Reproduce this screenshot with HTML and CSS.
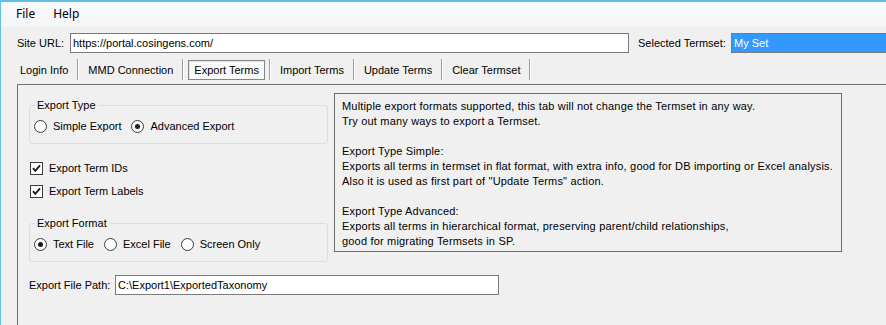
FILE: index.html
```html
<!DOCTYPE html>
<html lang="en">
<head>
    <meta charset="UTF-8">
    <meta name="viewport" content="width=device-width, initial-scale=1.0">
    <title>Taxonomy Export</title>
    <link rel="stylesheet" href="styles.css">
</head>
<body>
    <div class="window">
        <!-- Menu -->
        <div class="menuBar">
            <span class="menuItem">File</span>
            <span class="menuItem">Help</span>
        </div>

        <!-- Site + termset -->
        <div class="siteRow">
            <span class="siteLabel">Site URL:</span>
            <input class="textInput siteInput" type="text" value="https://portal.cosingens.com/">
            <span class="termsetLabel">Selected Termset:</span>
            <div class="comboBox">My Set</div>
        </div>

        <!-- Tool strip tabs -->
        <div class="tabStrip">
            <span class="tabItem">Login Info</span>
            <span class="tabSep"></span>
            <span class="tabItem">MMD Connection</span>
            <span class="tabSep"></span>
            <span class="tabItem active">Export Terms</span>
            <span class="tabSep"></span>
            <span class="tabItem">Import Terms</span>
            <span class="tabSep"></span>
            <span class="tabItem">Update Terms</span>
            <span class="tabSep"></span>
            <span class="tabItem">Clear Termset</span>
            <span class="tabSep"></span>
        </div>

        <div class="tabPage">
            <div class="leftCol">
                <fieldset class="groupBox">
                    <legend>Export Type</legend>
                    <div class="optionRow">
                        <span class="option"><span class="radio"></span>Simple Export</span>
                        <span class="option"><span class="radio checked"></span>Advanced Export</span>
                    </div>
                </fieldset>

                <div class="checkRow first">
                    <span class="checkBox"><svg width="11" height="11" viewBox="0 0 11 11"><polyline points="2,5.2 4.3,7.8 9,2.4" fill="none" stroke="#1e1e1e" stroke-width="1.9"/></svg></span>Export Term IDs
                </div>
                <div class="checkRow">
                    <span class="checkBox"><svg width="11" height="11" viewBox="0 0 11 11"><polyline points="2,5.2 4.3,7.8 9,2.4" fill="none" stroke="#1e1e1e" stroke-width="1.9"/></svg></span>Export Term Labels
                </div>

                <fieldset class="groupBox formatBox">
                    <legend>Export Format</legend>
                    <div class="optionRow">
                        <span class="option"><span class="radio checked"></span>Text File</span>
                        <span class="option"><span class="radio"></span>Excel File</span>
                        <span class="option"><span class="radio"></span>Screen Only</span>
                    </div>
                </fieldset>
            </div>

            <div class="infoBox">
                <div>Multiple export formats supported, this tab will not change the Termset in any way.</div>
                <div>Try out many ways to export a Termset.</div>
                <div>&nbsp;</div>
                <div>Export Type Simple:</div>
                <div>Exports all terms in termset in flat format, with extra info, good for DB importing or Excel analysis.</div>
                <div>Also it is used as first part of "Update Terms" action.</div>
                <div>&nbsp;</div>
                <div>Export Type Advanced:</div>
                <div>Exports all terms in hierarchical format, preserving parent/child relationships,</div>
                <div>good for migrating Termsets in SP.</div>
            </div>

            <div class="pathRow">
                <span class="pathLabel">Export File Path:</span>
                <input class="textInput pathInput" type="text" value="C:\Export1\ExportedTaxonomy">
            </div>
        </div>
    </div>
</body>
</html>
```

FILE: styles.css
```css
/* CSS for styling */
body {
  font-family: "Liberation Sans", Arial, sans-serif;
  font-size: 11px;
  color: #000;
  background-color: #f0f0f0;
  margin: 0;
  padding: 0;
  overflow: hidden;
}

.window {
  height: 325px;
  box-sizing: border-box;
  border-top: 2px solid #63bfe6;
  border-left: 1px solid #63bfe6;
  display: flex;
  flex-direction: column;
}

/* menu */
.menuBar {
  height: 25px;
  background: linear-gradient(#f9fafb, #f4f5f6);
  display: flex;
  align-items: center;
  padding-left: 6px;
  font-family: "Noto Sans", "Liberation Sans", sans-serif;
  font-size: 12px;
}

.menuItem {
  padding: 0 9px 2px 9px;
}

/* site url row */
.siteRow {
  display: flex;
  align-items: center;
  padding: 6px 0 0 16px;
}

.siteLabel {
  width: 53px;
}

.textInput {
  box-sizing: border-box;
  height: 20px;
  border: 1px solid #7a7a7a;
  background-color: #fff;
  font-family: "Liberation Sans", Arial, sans-serif;
  font-size: 11px;
  color: #000;
  padding: 0 2px;
  margin: 0;
  outline: none;
}

.siteInput {
  width: 559px;
}

.termsetLabel {
  margin-left: 9px;
  width: 93px;
}

.comboBox {
  flex: 1;
  height: 20px;
  box-sizing: border-box;
  border: 1px solid #7a7a7a;
  border-right: none;
  background-color: #3399ff;
  color: #fff;
  padding-left: 2px;
  line-height: 18px;
}

/* tabs */
.tabStrip {
  display: flex;
  align-items: center;
  height: 23px;
  margin-top: 5px;
  padding-left: 10px;
}

.tabItem {
  margin: 0 4px;
  padding: 0 4px;
  line-height: 18px;
  border: 1px solid transparent;
  white-space: nowrap;
}

.tabItem.active {
  padding: 0 5px;
  border-color: #858585;
  background-color: #fafafa;
  box-shadow: inset 1px 1px 0 #e2e2e2;
}

.tabSep {
  width: 1px;
  height: 21px;
  background-color: #a0a0a0;
  border-right: 1px solid #fff;
}

/* tab page */
.tabPage {
  flex: 1;
  margin: 3px 0 0 16px;
  border-top: 1px solid #707070;
  border-left: 1px solid #707070;
  padding: 8px 0 0 11px;
  display: grid;
  grid-template-columns: 299px 508px;
  column-gap: 6px;
  align-items: start;
  align-content: start;
}

.leftCol {
  padding-top: 5px;
}

.groupBox {
  margin: 0;
  padding: 0 0 8px 4px;
  border: 1px solid #d5dfe5;
  border-radius: 3px;
  min-width: 0;
}

.groupBox legend {
  padding: 0 2px;
  margin-left: 1px;
  line-height: 14px;
}

.formatBox {
  margin-top: 15px;
}

.optionRow {
  display: flex;
  align-items: center;
  height: 18px;
  margin-top: 5px;
}

.option {
  display: flex;
  align-items: center;
  margin-right: 10px;
  white-space: nowrap;
}

.radio {
  width: 13px;
  height: 13px;
  box-sizing: border-box;
  border: 1px solid #3c3c3c;
  border-radius: 50%;
  background-color: #fff;
  margin-right: 6px;
  display: flex;
  align-items: center;
  justify-content: center;
}

.radio.checked::after {
  content: "";
  width: 5px;
  height: 5px;
  border-radius: 50%;
  background-color: #1a1a1a;
}

.checkRow {
  display: flex;
  align-items: center;
  height: 20px;
  margin-top: 3px;
  padding-left: 1px;
}

.checkRow.first {
  margin-top: 14px;
}

.checkBox {
  width: 13px;
  height: 13px;
  box-sizing: border-box;
  border: 1px solid #3c3c3c;
  background-color: #fff;
  margin-right: 6px;
  display: flex;
}

.infoBox {
  border: 1px solid #6d6d6d;
  padding: 5px 7px 3px 7px;
  line-height: 15px;
  letter-spacing: 0.18px;
  white-space: nowrap;
  height: 159px;
  box-sizing: border-box;
  overflow: hidden;
}

.pathRow {
  grid-column: 1 / 3;
  display: flex;
  align-items: center;
  margin-top: 13px;
}

.pathLabel {
  width: 86px;
}

.pathInput {
  width: 384px;
}
```
